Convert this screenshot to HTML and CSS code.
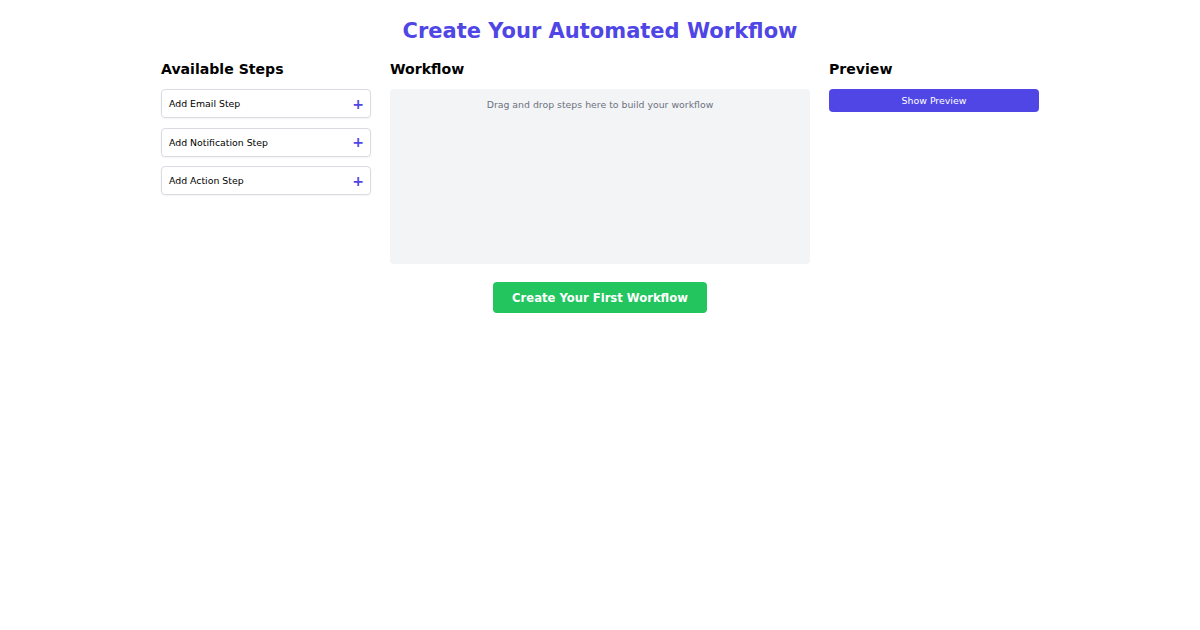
FILE: index.html
```html
<!DOCTYPE html>
<html>
<head>
<meta charset="utf-8">
<link rel="stylesheet" href="styles.css">
</head>
<body>
<div class="page">
  <h1 class="title">Create Your Automated Workflow</h1>
  <div class="columns">
    <div class="col side">
      <h2 class="heading">Available Steps</h2>
      <div class="steps">
        <div class="step"><span>Add Email Step</span><span class="plus">+</span></div>
        <div class="step"><span>Add Notification Step</span><span class="plus">+</span></div>
        <div class="step"><span>Add Action Step</span><span class="plus">+</span></div>
      </div>
    </div>
    <div class="col main">
      <h2 class="heading">Workflow</h2>
      <div class="dropzone">Drag and drop steps here to build your workflow</div>
      <div class="cta-row"><button class="cta">Create Your First Workflow</button></div>
    </div>
    <div class="col side">
      <h2 class="heading">Preview</h2>
      <button class="preview-btn">Show Preview</button>
    </div>
  </div>
</div>
</body>
</html>
```
FILE: styles.css
```css
* { box-sizing: border-box; }
body {
  margin: 0;
  font-family: "DejaVu Sans", sans-serif;
  background: #fff;
  color: #000;
}
.page {
  width: 878px;
  margin: 0 auto;
  padding-top: 18px;
}
.title {
  margin: 0;
  text-align: center;
  font-size: 21px;
  font-weight: bold;
  color: #4f46e5;
  line-height: 26px;
}
.columns {
  display: flex;
  gap: 19px;
  margin-top: 15px;
}
.side { width: 210px; }
.main { width: 420px; }
.heading {
  margin: 0 0 10px 0;
  font-size: 14.1px;
  font-weight: bold;
  line-height: 20px;
}
.steps {
  display: flex;
  flex-direction: column;
  gap: 9.5px;
}
.step {
  height: 29px;
  border: 1px solid #d9dbe0;
  border-radius: 4px;
  box-shadow: 0 1px 2px rgba(0,0,0,0.05);
  display: flex;
  align-items: center;
  justify-content: space-between;
  padding: 0 6px 0 7px;
  font-size: 9.35px;
}
.plus {
  color: #4f46e5;
  font-size: 14px;
  font-weight: bold;
  line-height: 1;
}
.dropzone {
  height: 175px;
  background: #f3f4f6;
  border-radius: 4px;
  text-align: center;
  font-size: 9.35px;
  color: #6b7280;
  padding-top: 10px;
}
.cta-row {
  display: flex;
  justify-content: center;
  margin-top: 18px;
}
.cta {
  width: 214px;
  height: 31px;
  border: none;
  border-radius: 4px;
  background: #22c55e;
  color: #fff;
  font-family: "DejaVu Sans", sans-serif;
  font-weight: bold;
  font-size: 11.6px;
}
.preview-btn {
  width: 100%;
  height: 23px;
  border: none;
  border-radius: 4px;
  background: #4f46e5;
  color: #fff;
  font-family: "DejaVu Sans", sans-serif;
  font-size: 9.4px;
}
```
